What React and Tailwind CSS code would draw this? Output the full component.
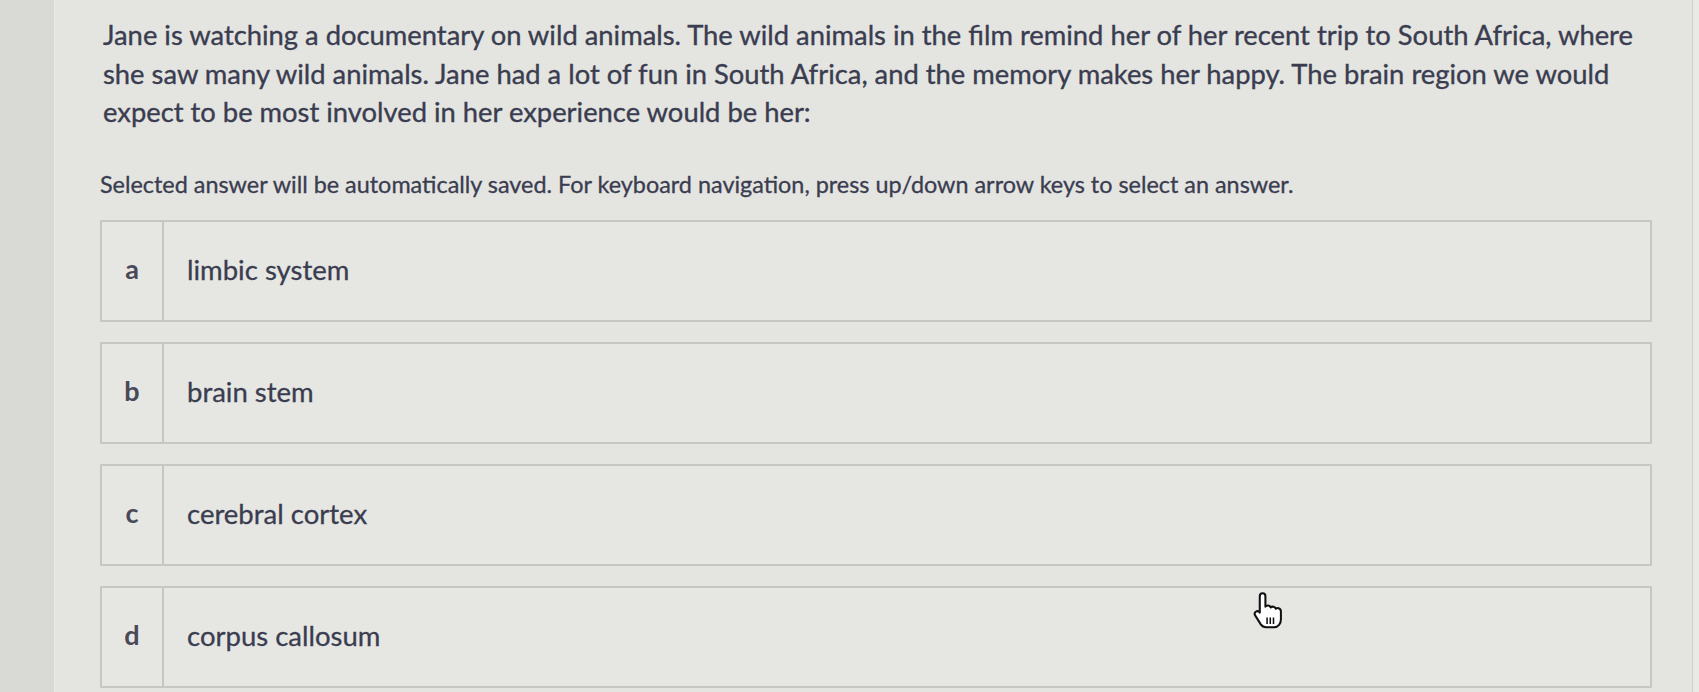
import React from "react";

const options = [
  { k: "a", t: "limbic system" },
  { k: "b", t: "brain stem" },
  { k: "c", t: "cerebral cortex" },
  { k: "d", t: "corpus callosum" },
];

function HandCursor() {
  return (
    <svg width="36" height="41" viewBox="0 0 28 32" className="absolute left-[1251px] top-[590px]">
      <path
        d="M9 2.5c1.3 0 2.2 1 2.2 2.3V13c.6-.7 1.4-1 2.2-.9 1 .1 1.7.8 1.9 1.6.6-.6 1.4-.8 2.2-.7 1 .2 1.6.9 1.8 1.7.6-.5 1.3-.7 2.1-.5 1.2.3 1.9 1.3 1.9 2.6v6.2c0 3.2-2.1 6-5.2 6h-6.4c-1.8 0-3.1-.8-4.1-2.2L3.3 20c-.7-1-.5-2.3.4-3 .9-.7 2.2-.5 2.9.3l.2.3V4.8C6.8 3.5 7.7 2.5 9 2.5z"
        fill="#ffffff"
        stroke="#111111"
        strokeWidth="1.6"
        strokeLinejoin="round"
      />
      <path d="M12.5 21.5v5M15 21.5v5M17.5 21.5v5" stroke="#111111" strokeWidth="1.2" />
    </svg>
  );
}

export default function App() {
  return (
    <div
      className="relative flex w-[1699px] h-[692px] overflow-hidden bg-[#e4e4e0]"
      style={{ fontFamily: "Lato, 'Liberation Sans', sans-serif" }}
    >
      <div className="w-[55px] shrink-0 bg-[#d9d9d5] border-r border-[#e9e9e5]" />
      <div className="flex-1 pl-[45px] pt-[16px] flex flex-col">
        <p className="pl-[3px] text-[27.37px] leading-[38.5px] text-[#3a3d50] [-webkit-text-stroke:0.35px_#3a3d50]">
          Jane is watching a documentary on wild animals. The wild animals in the film remind her of her recent trip to South Africa, where
          <br />
          she saw many wild animals. Jane had a lot of fun in South Africa, and the memory makes her happy. The brain region we would
          <br />
          expect to be most involved in her experience would be her:
        </p>
        <p className="mt-[37px] text-[23.4px] leading-[30px] text-[#3a3d50] [-webkit-text-stroke:0.3px_#3a3d50]">
          Selected answer will be automatically saved. For keyboard navigation, press up/down arrow keys to select an answer.
        </p>
        <div className="mt-[21px] flex flex-col gap-[20px] w-[1552px]">
          {options.map((o) => (
            <div key={o.k} className="flex h-[102px] border-2 border-[#c6c6c2] bg-[#e6e6e2]">
              <div className="w-[62px] shrink-0 flex items-center justify-center pb-[2px] border-r-2 border-[#c6c6c2] text-[27px] font-bold text-[#484a58]">
                {o.k}
              </div>
              <div className="flex-1 flex items-center pl-[23px] pb-[2px] text-[27.5px] text-[#3a3d50] [-webkit-text-stroke:0.3px_#3a3d50]">
                {o.t}
              </div>
            </div>
          ))}
        </div>
      </div>
      <div className="w-[7px] shrink-0 border-l border-[#cfcfcb] bg-[#e9e9e5]" />
      <HandCursor />
    </div>
  );
}
